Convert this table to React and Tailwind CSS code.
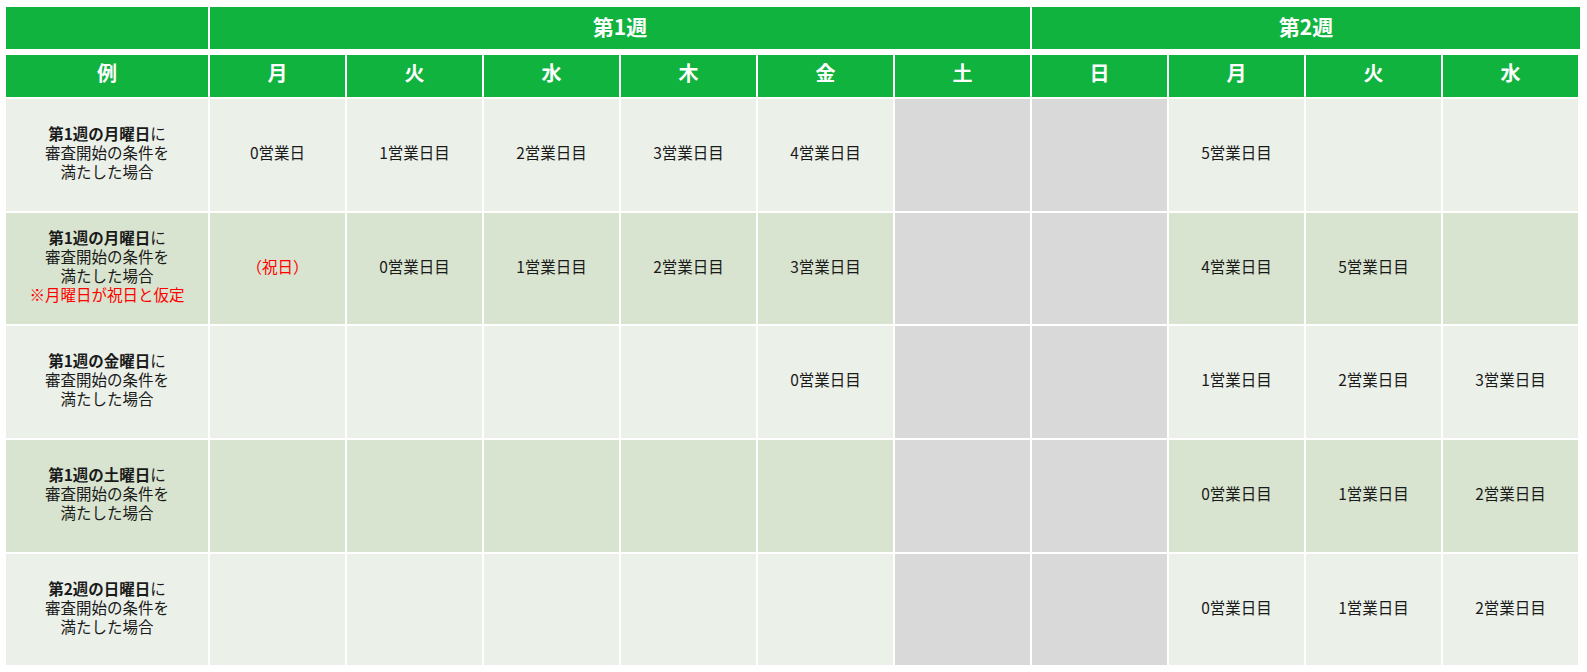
import React from "react";

const days = ["月", "火", "水", "木", "金", "土", "日", "月", "火", "水"];

const rows = [
  {
    label: "第1週の月曜日",
    note: null,
    cells: ["0営業日", "1営業日目", "2営業日目", "3営業日目", "4営業日目", "", "", "5営業日目", "", ""],
    h: "h-[112px]",
  },
  {
    label: "第1週の月曜日",
    note: "※月曜日が祝日と仮定",
    cells: ["（祝日）", "0営業日目", "1営業日目", "2営業日目", "3営業日目", "", "", "4営業日目", "5営業日目", ""],
    h: "h-[111px]",
  },
  {
    label: "第1週の金曜日",
    note: null,
    cells: ["", "", "", "", "0営業日目", "", "", "1営業日目", "2営業日目", "3営業日目"],
    h: "h-[112px]",
  },
  {
    label: "第1週の土曜日",
    note: null,
    cells: ["", "", "", "", "", "", "", "0営業日目", "1営業日目", "2営業日目"],
    h: "h-[112px]",
  },
  {
    label: "第2週の日曜日",
    note: null,
    cells: ["", "", "", "", "", "", "", "0営業日目", "1営業日目", "2営業日目"],
    h: "h-[111px]",
  },
];

const cols = "grid grid-cols-[202px_repeat(10,135px)] gap-x-[2px]";

export default function App() {
  return (
    <div
      className="w-[1587px] h-[672px] bg-white pl-[6px] pt-[7px] text-[#1a1a1a]"
      style={{ fontFamily: '"Noto Sans CJK JP", "Noto Sans", sans-serif' }}
    >
      {/* Week header */}
      <div className="grid grid-cols-[202px_820px_548px] gap-x-[2px] h-[42px]">
        <div className="bg-[#10b33e]" />
        <div className="bg-[#10b33e] flex items-center justify-center text-white font-bold text-[21px] leading-none pb-[4px]">
          第1週
        </div>
        <div className="bg-[#10b33e] flex items-center justify-center text-white font-bold text-[21px] leading-none pb-[4px]">
          第2週
        </div>
      </div>

      {/* Day header */}
      <div className={`${cols} mt-[6px] h-[42px]`}>
        <div className="bg-[#10b33e] flex items-center justify-center text-white font-bold text-[20px] leading-none pb-[6px]">
          例
        </div>
        {days.map((d, i) => (
          <div
            key={i}
            className="bg-[#10b33e] flex items-center justify-center text-white font-bold text-[20px] leading-none pb-[6px]"
          >
            {d}
          </div>
        ))}
      </div>

      {/* Body */}
      <div className="flex flex-col gap-y-[2px] mt-[2px]">
        {rows.map((r, ri) => {
          const bg = ri % 2 === 0 ? "bg-[#ebf0e9]" : "bg-[#d8e4cf]";
          return (
            <div key={ri} className={`${cols} ${r.h}`}>
              <div
                className={`${bg} flex flex-col items-center justify-center pb-[5px] text-center text-[15.5px] leading-[19px]`}
              >
                <div>
                  <span className="font-bold">{r.label}</span>に
                </div>
                <div>審査開始の条件を</div>
                <div>満たした場合</div>
                {r.note && <div className="text-[#ff0000]">{r.note}</div>}
              </div>
              {r.cells.map((c, ci) => {
                const weekend = ci === 5 || ci === 6;
                const red = c === "（祝日）";
                return (
                  <div
                    key={ci}
                    className={`${weekend ? "bg-[#d9d9d9]" : bg} flex items-center justify-center pb-[5px] text-[15.5px] leading-[19px] ${
                      red ? "text-[#ff0000]" : ""
                    }`}
                  >
                    {c}
                  </div>
                );
              })}
            </div>
          );
        })}
      </div>
    </div>
  );
}
